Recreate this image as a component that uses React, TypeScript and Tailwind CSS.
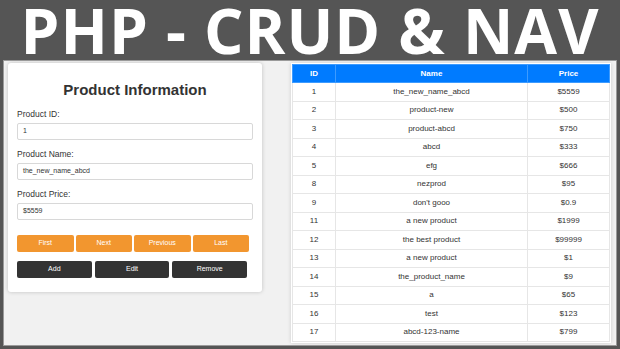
import React from "react";

const rows: [string, string, string][] = [
  ["1", "the_new_name_abcd", "$5559"],
  ["2", "product-new", "$500"],
  ["3", "product-abcd", "$750"],
  ["4", "abcd", "$333"],
  ["5", "efg", "$666"],
  ["8", "nezprod", "$95"],
  ["9", "don't gooo", "$0.9"],
  ["11", "a new product", "$1999"],
  ["12", "the best product", "$99999"],
  ["13", "a new product", "$1"],
  ["14", "the_product_name", "$9"],
  ["15", "a", "$65"],
  ["16", "test", "$123"],
  ["17", "abcd-123-name", "$799"],
];

function Field({ label, value }: { label: string; value: string }) {
  return (
    <div className="flex flex-col">
      <div className="text-[8.5px] leading-[10px] text-[#333] mb-[4px]">{label}</div>
      <div className="h-[17px] border border-[#d8d8d8] rounded-[2px] bg-white flex items-center pl-[5px] text-[7px] text-[#333]">
        {value}
      </div>
    </div>
  );
}

export default function App() {
  return (
    <div
      className="w-[620px] h-[349px] bg-[#555555] flex flex-col overflow-hidden"
      style={{ fontFamily: '"Liberation Sans", Arial, sans-serif' }}
    >
      <div className="h-[60px] flex justify-center">
        <div
          className="text-white font-bold text-[62px] leading-[60px] tracking-[1px] whitespace-nowrap"
          style={{ fontFamily: '"Open Sans", "Noto Sans", sans-serif' }}
        >
          PHP - CRUD &amp; NAV
        </div>
      </div>
      <div className="flex-1 px-[3px] pb-[3px] flex">
        <div className="flex-1 border border-[#9a9a9a] bg-[#f1f1f1] flex items-start pl-[4px] pt-[2px] overflow-hidden">
          <div className="w-[254px] bg-white rounded-[3px] shadow-[0_0_4px_rgba(0,0,0,0.2)] px-[9px] pb-[14px] flex flex-col">
            <div className="text-[15px] font-bold text-[#333] text-center mt-[17px] leading-[20px] mb-[9px]">
              Product Information
            </div>
            <div className="flex flex-col gap-[9px]">
              <Field label="Product ID:" value="1" />
              <Field label="Product Name:" value="the_new_name_abcd" />
              <Field label="Product Price:" value="$5559" />
            </div>
            <div className="flex gap-[2px] mt-[15px] w-[232px]">
              {["First", "Next", "Previous", "Last"].map((t) => (
                <div
                  key={t}
                  className="flex-1 h-[17px] bg-[#f2962f] rounded-[2px] text-white text-[7px] flex items-center justify-center"
                >
                  {t}
                </div>
              ))}
            </div>
            <div className="flex gap-[3px] mt-[9px] w-[230px]">
              {["Add", "Edit", "Remove"].map((t) => (
                <div
                  key={t}
                  className="flex-1 h-[17px] bg-[#333333] rounded-[2px] text-white text-[7px] flex items-center justify-center"
                >
                  {t}
                </div>
              ))}
            </div>
          </div>
          <div className="ml-[29px] bg-white p-[1px] shadow-[0_0_4px_rgba(0,0,0,0.15)] w-[320px]">
            <table className="w-full border-collapse text-[8px] text-[#333]">
              <thead>
                <tr className="bg-[#007bff] text-white h-[18px]">
                  <th className="w-[43px] font-bold border border-[#3d9bff]">ID</th>
                  <th className="w-[192px] font-bold border border-[#3d9bff]">Name</th>
                  <th className="font-bold border border-[#3d9bff]">Price</th>
                </tr>
              </thead>
              <tbody>
                {rows.map((r) => (
                  <tr key={r[0]} className="h-[18.5px]">
                    <td className="text-center border border-[#e6e6e6] p-0">{r[0]}</td>
                    <td className="text-center border border-[#e6e6e6] p-0">{r[1]}</td>
                    <td className="text-center border border-[#e6e6e6] p-0">{r[2]}</td>
                  </tr>
                ))}
              </tbody>
            </table>
          </div>
        </div>
      </div>
    </div>
  );
}
